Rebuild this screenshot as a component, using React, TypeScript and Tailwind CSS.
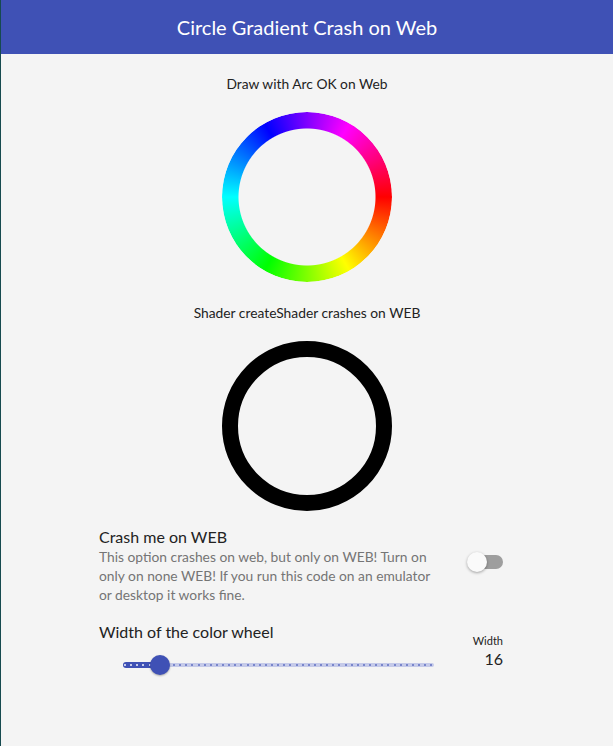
import React from 'react';

const ticks = Array.from({ length: 51 }, (_, i) => i);

const ColorWheel: React.FC = () => (
  <div
    className="w-[170px] h-[170px] rounded-full"
    style={{
      background:
        'conic-gradient(from 90deg, #ff0000, #ffff00, #00ff00, #00ffff, #0000ff, #ff00ff, #ff0000)',
      WebkitMask: 'radial-gradient(circle, transparent 68px, #000 69px)',
      mask: 'radial-gradient(circle, transparent 68px, #000 69px)',
    }}
  />
);

const Slider: React.FC<{ value: number; min: number; max: number }> = ({ value, min, max }) => {
  const pct = ((value - min) / (max - min)) * 100;
  return (
    <div className="relative h-[20px] flex items-center">
      <div className="relative w-full h-[4px] bg-[#c5cae9] rounded-full">
        <div className="absolute left-0 top-[-1px] h-[6px] bg-[#3f51b5] rounded-full" style={{ width: `${pct}%` }} />
        <div className="absolute inset-0 flex justify-between items-center px-[1px]">
          {ticks.map((i) => (
            <div
              key={i}
              className={(i / 50) * 100 <= pct ? 'w-[2px] h-[2px] bg-[#c5cae9]' : 'w-[2px] h-[2px] bg-[#7986cb]'}
            />
          ))}
        </div>
      </div>
      <div
        className="absolute top-0 w-[20px] h-[20px] -ml-[10px] rounded-full bg-[#3f51b5] shadow-[0_1px_2px_rgba(0,0,0,0.3)]"
        style={{ left: `${pct}%` }}
      />
    </div>
  );
};

export default function App() {
  return (
    <div
      className="w-[613px] h-[746px] bg-[#f4f4f4] border-l border-[#164a4f] text-[#222]"
      style={{ fontFamily: '"Lato", "Noto Sans", sans-serif' }}
    >
      <header className="h-[54px] bg-[#3f51b5] flex items-center justify-center">
        <h1 className="text-white text-[20px] leading-none">Circle Gradient Crash on Web</h1>
      </header>

      <div className="flex flex-col items-center">
        <div className="mt-[22px] text-[13.8px] leading-[16px] text-[#222]">Draw with Arc OK on Web</div>
        <div className="mt-[20px]">
          <ColorWheel />
        </div>

        <div className="mt-[23px] text-[13.8px] leading-[16px] text-[#222]">Shader createShader crashes on WEB</div>
        <div className="mt-[20px] w-[170px] h-[170px] rounded-full border-[16px] border-black" />
      </div>

      <div className="pl-[98px] pr-[110px] mt-[16px]">
        <div className="flex items-center">
          <div className="flex-1">
            <div className="text-[16px] leading-[20px] text-[#222]">Crash me on WEB</div>
            <div className="text-[13.8px] leading-[19px] text-[#757575] w-[344px]">
              This option crashes on web, but only on WEB! Turn on only on none WEB! If you run this code on an
              emulator or desktop it works fine.
            </div>
          </div>
          <div className="relative w-[36px] h-[20px] flex items-center mb-[8px]">
            <div className="ml-[10px] w-[26px] h-[14px] rounded-full bg-[#9e9e9e]" />
            <div className="absolute left-0 top-0 w-[20px] h-[20px] rounded-full bg-[#fafafa] shadow-[0_1px_3px_rgba(0,0,0,0.35)]" />
          </div>
        </div>

        <div className="mt-[18px] text-[16px] leading-[20px] text-[#222]">Width of the color wheel</div>
        <div className="flex items-start -mt-[8px]">
          <div className="flex-1 px-[24px] pt-[21px]">
            <Slider value={16} min={10} max={60} />
          </div>
          <div className="w-[45px] flex flex-col items-end">
            <div className="text-[11px] leading-[14px] text-[#222]">Width</div>
            <div className="text-[16px] leading-[22px] text-[#222]">16</div>
          </div>
        </div>
      </div>
    </div>
  );
}
